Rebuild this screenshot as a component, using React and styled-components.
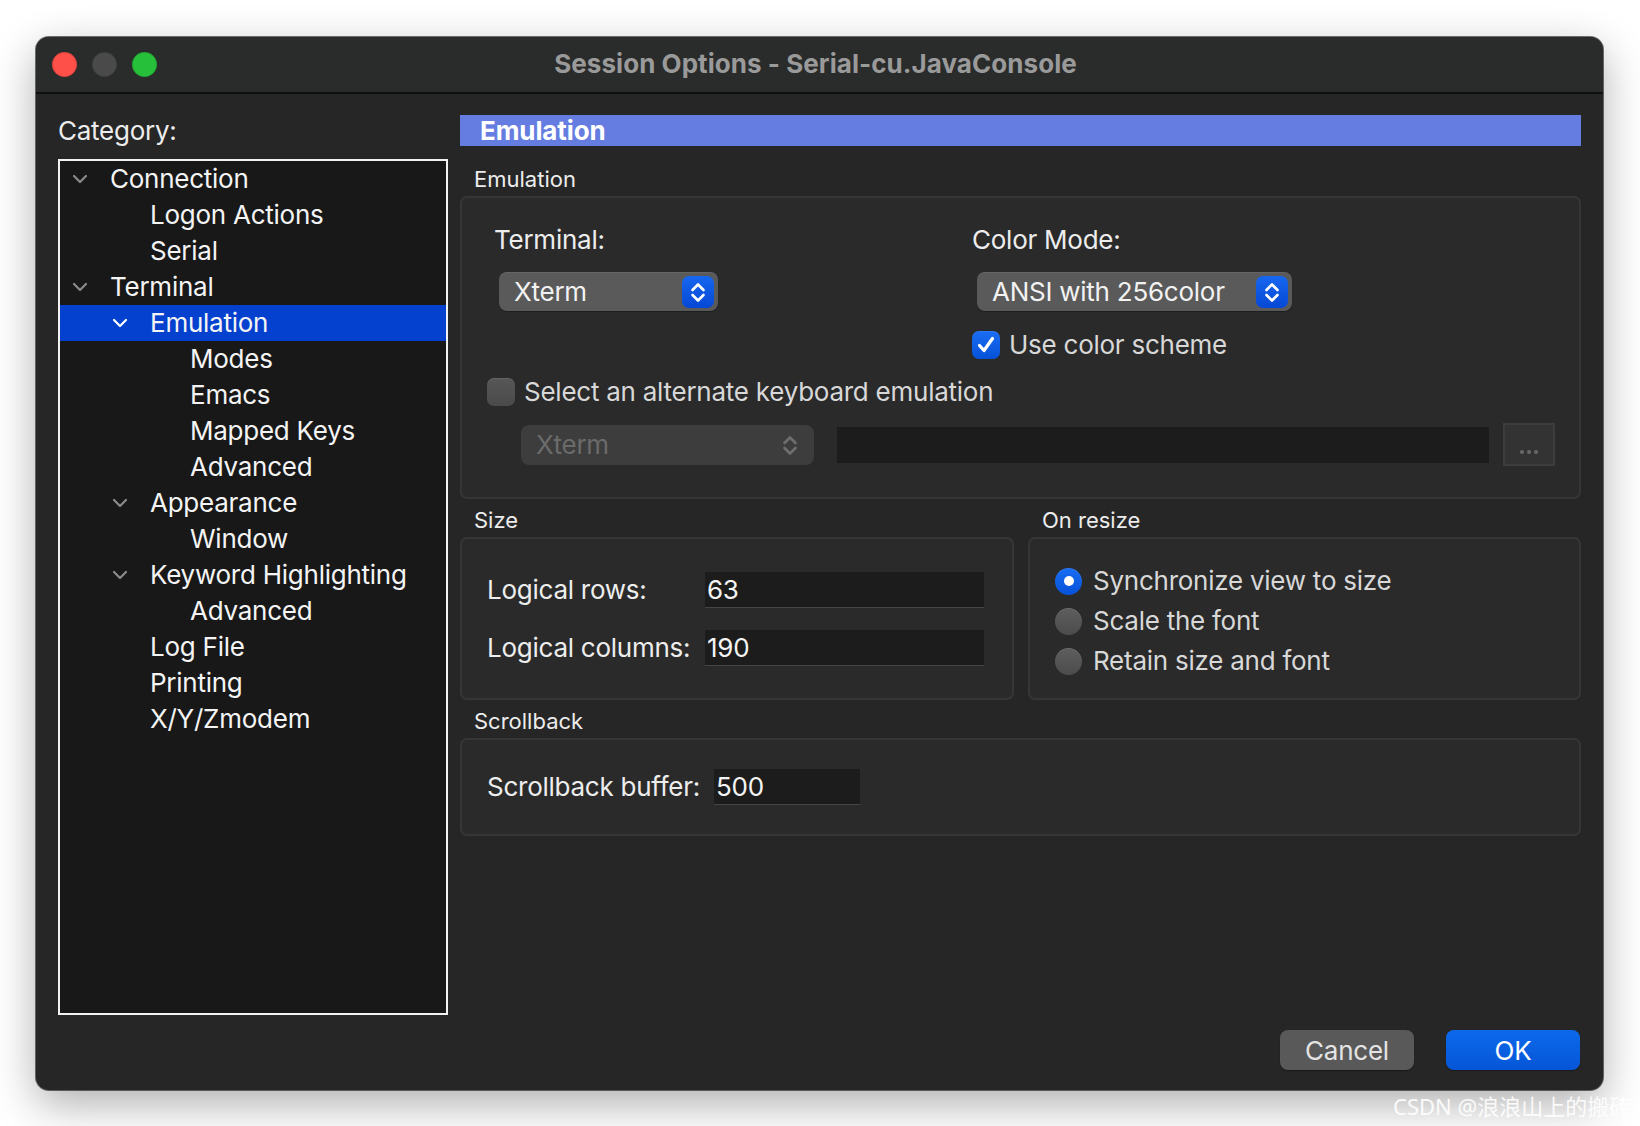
import React from "react";
import styled, { createGlobalStyle } from "styled-components";

const GlobalStyle = createGlobalStyle`
  html, body {
    margin: 0;
    padding: 0;
    background: #ffffff;
    overflow: hidden;
  }
  body {
    font-family: "Inter", "Noto Sans", "Noto Sans CJK SC", sans-serif;
    -webkit-font-smoothing: antialiased;
  }
`;

const Page = styled.div`
  position: relative;
  width: 1640px;
  height: 1126px;
  padding: 37px 0 0 36px;
  box-sizing: border-box;
`;

const Window = styled.div`
  width: 1567px;
  height: 1053px;
  border-radius: 13px;
  background: #262626;
  box-shadow: 0 14px 44px rgba(0, 0, 0, 0.32), 0 0 0 1px rgba(0, 0, 0, 0.55);
  display: flex;
  flex-direction: column;
  overflow: hidden;
  letter-spacing: -0.25px;
`;

const TitleBar = styled.div`
  height: 55px;
  flex: none;
  background: #2a2b2b;
  border-bottom: 2px solid #0e0e0e;
  display: grid;
  grid-template-columns: 1fr auto 1fr;
  align-items: center;
  padding: 0 16px;
`;

const Lights = styled.div`
  display: flex;
  gap: 15px;
  align-items: center;
`;

const Light = styled.span`
  width: 25px;
  height: 25px;
  border-radius: 50%;
  background: ${(p) => p.$color};
  box-shadow: inset 0 0 0 1px rgba(0, 0, 0, 0.15);
`;

const Title = styled.div`
  font-size: 26px;
  font-weight: 700;
  color: #9a9a9a;
  letter-spacing: 0.05px;
  margin-top: -3px;
  margin-right: 8px;
`;

const Body = styled.div`
  flex: 1;
  display: flex;
  flex-direction: column;
  padding: 21px 22px 20px 22px;
  min-height: 0;
`;

const Main = styled.div`
  flex: 1;
  display: grid;
  grid-template-columns: 390px 1fr;
  column-gap: 12px;
  min-height: 0;
`;

const LeftCol = styled.div`
  display: flex;
  flex-direction: column;
  min-height: 0;
`;

const CategoryLabel = styled.div`
  font-size: 26px;
  line-height: 32px;
  color: #ececec;
  margin-bottom: 12px;
`;

const Tree = styled.div`
  flex: 1;
  background: #181818;
  border: 2px solid #f2f2f2;
  display: flex;
  flex-direction: column;
`;

const TreeRow = styled.div`
  height: 36px;
  display: flex;
  align-items: center;
  padding-left: ${(p) => 12 + p.$level * 40}px;
  background: ${(p) => (p.$selected ? "#0441cf" : "transparent")};
  color: #f4f4f4;
  font-size: 26px;
  line-height: 30px;
  padding-bottom: 1px;
  box-sizing: border-box;
`;

const ChevronSlot = styled.span`
  width: 16px;
  height: 10px;
  flex: none;
  margin-right: 22px;
  display: flex;
`;

const RightCol = styled.div`
  display: flex;
  flex-direction: column;
`;

const PanelHeader = styled.div`
  height: 31px;
  background: #657de0;
  color: #ffffff;
  font-size: 26px;
  font-weight: 700;
  display: flex;
  align-items: center;
  padding-left: 20px;
  letter-spacing: -0.1px;
`;

const GroupLabel = styled.div`
  font-size: 22px;
  line-height: 26px;
  color: #ececec;
  letter-spacing: 0;
  padding: ${(p) => (p.$first ? "20px" : "8px")} 0 4px 14px;
`;

const GroupBox = styled.div`
  background: #2a2a2a;
  border: 2px solid #363636;
  border-radius: 7px;
  box-sizing: border-box;
`;

const EmulationBox = styled(GroupBox)`
  padding: 26px 24px 31px 25px;
`;

const TopGrid = styled.div`
  display: grid;
  grid-template-columns: 485px 1fr;
`;

const Col = styled.div`
  display: flex;
  flex-direction: column;
  align-items: flex-start;
`;

const FieldLabel = styled.div`
  font-size: 26px;
  line-height: 32px;
  color: #ededed;
  margin-left: ${(p) => p.$indent || 0}px;
`;

const SelectBox = styled.div`
  width: ${(p) => p.$width}px;
  height: ${(p) => (p.$disabled ? 40 : 39)}px;
  box-sizing: border-box;
  margin-left: ${(p) => p.$indent || 0}px;
  margin-top: ${(p) => p.$top || 0}px;
  border-radius: 8px;
  background: ${(p) => (p.$disabled ? "#3d3d3d" : "#5a5a5a")};
  box-shadow: ${(p) =>
    p.$disabled ? "none" : "inset 0 1px 0 rgba(255,255,255,0.08), 0 1px 1px rgba(0,0,0,0.3)"};
  display: flex;
  align-items: center;
  justify-content: space-between;
  padding: 0 4px 0 15px;
  color: ${(p) => (p.$disabled ? "#6b6b6b" : "#f2f2f2")};
  font-size: 26px;
  flex: none;
`;

const Stepper = styled.span`
  width: 32px;
  height: 32px;
  border-radius: 7px;
  background: linear-gradient(#1767ef, #0548d6);
  display: flex;
  align-items: center;
  justify-content: center;
`;

const PlainStepper = styled.span`
  width: 32px;
  height: 32px;
  display: flex;
  align-items: center;
  justify-content: center;
  margin-right: 4px;
`;

const CheckRow = styled.label`
  display: flex;
  align-items: center;
  gap: 9px;
  margin-top: ${(p) => p.$top || 0}px;
  font-size: 26px;
  line-height: 30px;
  color: #d8d8d8;
`;

const CheckBox = styled.span`
  width: 28px;
  height: 28px;
  border-radius: 7px;
  box-sizing: border-box;
  flex: none;
  display: flex;
  align-items: center;
  justify-content: center;
  background: ${(p) => (p.$checked ? "linear-gradient(#1a6df2, #0552d9)" : "linear-gradient(#575757, #4a4a4a)")};
  box-shadow: inset 0 1px 0 rgba(255, 255, 255, 0.08);
`;

const AltRow = styled.div`
  display: flex;
  align-items: center;
  margin-top: 16px;
  padding-left: 34px;
`;

const DarkField = styled.div`
  flex: 1;
  height: 36px;
  background: #1c1c1c;
  margin-left: 23px;
`;

const DotsButton = styled.div`
  width: 52px;
  height: 43px;
  box-sizing: border-box;
  margin-left: 14px;
  background: #333333;
  border: 2px solid #3d3d3d;
  display: flex;
  align-items: flex-end;
  justify-content: center;
  padding-bottom: 10px;
  gap: 3px;
`;

const Dot = styled.span`
  width: 4px;
  height: 4px;
  border-radius: 50%;
  background: #6a6a6a;
`;

const TwoGroups = styled.div`
  display: grid;
  grid-template-columns: 554px 1fr;
  column-gap: 14px;
`;

const GroupColumn = styled.div`
  display: flex;
  flex-direction: column;
`;

const SizeBox = styled(GroupBox)`
  flex: 1;
  padding: 33px 28px 32px 25px;
  display: flex;
  flex-direction: column;
  gap: 22px;
`;

const FormRow = styled.div`
  display: grid;
  grid-template-columns: ${(p) => p.$labelWidth}px ${(p) => p.$inputWidth || "1fr"};
  align-items: center;
`;

const TextInput = styled.div`
  height: 36px;
  background: #1c1c1c;
  border-bottom: 1px solid #454545;
  color: #f4f4f4;
  font-size: 26px;
  display: flex;
  align-items: center;
  padding-left: 2px;
  box-sizing: border-box;
`;

const ResizeBox = styled(GroupBox)`
  flex: 1;
  padding: 28px 20px 18px 25px;
  display: flex;
  flex-direction: column;
  gap: 12px;
`;

const RadioRow = styled.div`
  display: flex;
  align-items: center;
  gap: 11px;
  font-size: 26px;
  line-height: 28px;
  color: #d8d8d8;
`;

const Radio = styled.span`
  width: 27px;
  height: 27px;
  border-radius: 50%;
  flex: none;
  display: flex;
  align-items: center;
  justify-content: center;
  background: ${(p) => (p.$on ? "linear-gradient(#1a6df2, #0552d9)" : "linear-gradient(#5e5e5e, #4c4c4c)")};
  box-shadow: inset 0 1px 0 rgba(255, 255, 255, 0.08);
  &::after {
    content: "";
    width: 10px;
    height: 10px;
    border-radius: 50%;
    background: #ffffff;
    display: ${(p) => (p.$on ? "block" : "none")};
  }
`;

const ScrollBox = styled(GroupBox)`
  padding: 29px 25px 29px 25px;
`;

const Footer = styled.div`
  margin-top: 15px;
  display: flex;
  justify-content: flex-end;
  gap: 32px;
  padding-right: 1px;
`;

const Button = styled.button`
  width: 134px;
  height: 40px;
  border: none;
  border-radius: 8px;
  font-family: inherit;
  font-size: 26px;
  letter-spacing: -0.25px;
  color: ${(p) => (p.$primary ? "#ffffff" : "#e4e4e4")};
  background: ${(p) => (p.$primary ? "linear-gradient(#0c69ec, #0556d6)" : "#595959")};
  box-shadow: 0 1px 1px rgba(0, 0, 0, 0.35);
  padding: 0;
`;

const Watermark = styled.div`
  position: absolute;
  left: 1393px;
  top: 1092px;
  font-size: 22px;
  line-height: 28px;
  color: rgba(255, 255, 255, 0.9);
  white-space: nowrap;
  font-family: "Noto Sans", "Noto Sans CJK SC", sans-serif;
`;

const Chevron = ({ color }) => (
  <svg width="16" height="10" viewBox="0 0 16 10">
    <polyline
      points="2,2 8,8 14,2"
      fill="none"
      stroke={color}
      strokeWidth="2.2"
      strokeLinecap="round"
      strokeLinejoin="round"
    />
  </svg>
);

const UpDown = ({ color }) => (
  <svg width="32" height="32" viewBox="0 0 32 32">
    <polyline points="10.5,14 16,8.5 21.5,14" fill="none" stroke={color} strokeWidth="2.6" strokeLinecap="round" strokeLinejoin="round" />
    <polyline points="10.5,19 16,24.5 21.5,19" fill="none" stroke={color} strokeWidth="2.6" strokeLinecap="round" strokeLinejoin="round" />
  </svg>
);

const CheckMark = () => (
  <svg width="28" height="28" viewBox="0 0 28 28">
    <polyline points="7.5,14.5 12,19.5 20.5,7.5" fill="none" stroke="#ffffff" strokeWidth="3.2" strokeLinecap="round" strokeLinejoin="round" />
  </svg>
);

const treeItems = [
  { label: "Connection", level: 0, open: true },
  { label: "Logon Actions", level: 1 },
  { label: "Serial", level: 1 },
  { label: "Terminal", level: 0, open: true },
  { label: "Emulation", level: 1, open: true, selected: true },
  { label: "Modes", level: 2 },
  { label: "Emacs", level: 2 },
  { label: "Mapped Keys", level: 2 },
  { label: "Advanced", level: 2 },
  { label: "Appearance", level: 1, open: true },
  { label: "Window", level: 2 },
  { label: "Keyword Highlighting", level: 1, open: true },
  { label: "Advanced", level: 2 },
  { label: "Log File", level: 1 },
  { label: "Printing", level: 1 },
  { label: "X/Y/Zmodem", level: 1 },
];

export default function App() {
  return (
    <>
      <GlobalStyle />
      <Page>
        <Window>
          <TitleBar>
            <Lights>
              <Light $color="#fe4f49" />
              <Light $color="#4a4a4a" />
              <Light $color="#27c03a" />
            </Lights>
            <Title>Session Options - Serial-cu.JavaConsole</Title>
            <span />
          </TitleBar>
          <Body>
            <Main>
              <LeftCol>
                <CategoryLabel>Category:</CategoryLabel>
                <Tree>
                  {treeItems.map((it, i) => (
                    <TreeRow key={i} $level={it.level} $selected={it.selected}>
                      <ChevronSlot>
                        {it.open && <Chevron color={it.selected ? "#ffffff" : "#8a8a8a"} />}
                      </ChevronSlot>
                      {it.label}
                    </TreeRow>
                  ))}
                </Tree>
              </LeftCol>
              <RightCol>
                <PanelHeader>Emulation</PanelHeader>
                <GroupLabel $first>Emulation</GroupLabel>
                <EmulationBox>
                  <TopGrid>
                    <Col>
                      <FieldLabel $indent={7}>Terminal:</FieldLabel>
                      <SelectBox $width={219} $indent={12} $top={16}>
                        Xterm
                        <Stepper>
                          <UpDown color="#ffffff" />
                        </Stepper>
                      </SelectBox>
                    </Col>
                    <Col>
                      <FieldLabel>Color Mode:</FieldLabel>
                      <SelectBox $width={315} $indent={5} $top={16}>
                        ANSI with 256color
                        <Stepper>
                          <UpDown color="#ffffff" />
                        </Stepper>
                      </SelectBox>
                      <CheckRow $top={19}>
                        <CheckBox $checked>
                          <CheckMark />
                        </CheckBox>
                        Use color scheme
                      </CheckRow>
                    </Col>
                  </TopGrid>
                  <CheckRow $top={17}>
                    <CheckBox />
                    Select an alternate keyboard emulation
                  </CheckRow>
                  <AltRow>
                    <SelectBox $width={293} $disabled>
                      Xterm
                      <PlainStepper>
                        <UpDown color="#6e6e6e" />
                      </PlainStepper>
                    </SelectBox>
                    <DarkField />
                    <DotsButton>
                      <Dot />
                      <Dot />
                      <Dot />
                    </DotsButton>
                  </AltRow>
                </EmulationBox>

                <TwoGroups>
                  <GroupColumn>
                    <GroupLabel>Size</GroupLabel>
                    <SizeBox>
                      <FormRow $labelWidth={218}>
                        <FieldLabel>Logical rows:</FieldLabel>
                        <TextInput>63</TextInput>
                      </FormRow>
                      <FormRow $labelWidth={218}>
                        <FieldLabel>Logical columns:</FieldLabel>
                        <TextInput>190</TextInput>
                      </FormRow>
                    </SizeBox>
                  </GroupColumn>
                  <GroupColumn>
                    <GroupLabel>On resize</GroupLabel>
                    <ResizeBox>
                      <RadioRow>
                        <Radio $on />
                        Synchronize view to size
                      </RadioRow>
                      <RadioRow>
                        <Radio />
                        Scale the font
                      </RadioRow>
                      <RadioRow>
                        <Radio />
                        Retain size and font
                      </RadioRow>
                    </ResizeBox>
                  </GroupColumn>
                </TwoGroups>

                <GroupLabel>Scrollback</GroupLabel>
                <ScrollBox>
                  <FormRow $labelWidth={227} $inputWidth="146px">
                    <FieldLabel>Scrollback buffer:</FieldLabel>
                    <TextInput>500</TextInput>
                  </FormRow>
                </ScrollBox>
              </RightCol>
            </Main>
            <Footer>
              <Button>Cancel</Button>
              <Button $primary>OK</Button>
            </Footer>
          </Body>
        </Window>
        <Watermark>CSDN @浪浪山上的搬砖工</Watermark>
      </Page>
    </>
  );
}
